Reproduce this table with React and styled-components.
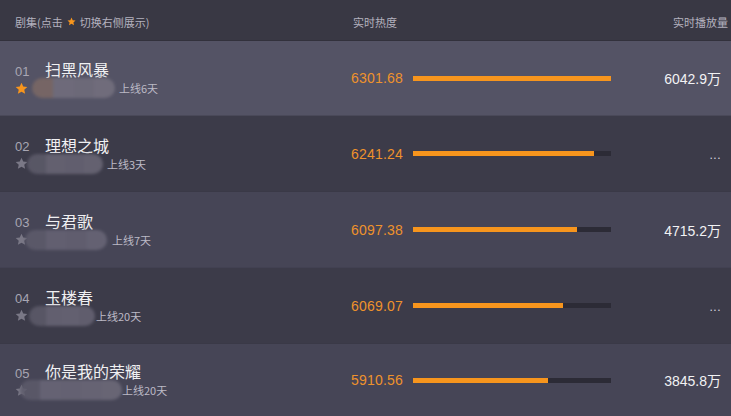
import React from "react";
import styled, { createGlobalStyle } from "styled-components";

const Global = createGlobalStyle`
  html, body { margin: 0; padding: 0; background: #3b3a48; }
  body { font-family: "Liberation Sans", "Noto Sans CJK SC", Arial, sans-serif; }
`;

const Board = styled.div`
  width: 731px;
  height: 416px;
  overflow: hidden;
  background: #3b3a48;
`;

const Header = styled.div`
  height: 41px;
  display: flex;
  align-items: center;
  background: #393844;
  border-bottom: 1px solid #32313c;
  font-family: "Noto Sans CJK SC", sans-serif;
  font-size: 11px;
  color: #b4b2bf;
  padding-top: 3px;
  box-sizing: border-box;
`;

const HeadLeft = styled.div`
  width: 353px;
  padding-left: 15px;
  box-sizing: border-box;
  display: flex;
  align-items: center;
  gap: 4px;
`;

const HeadMid = styled.div`
  flex: 1;
`;

const HeadRight = styled.div`
  padding-right: 3px;
`;

const Row = styled.div`
  height: ${(p) => p.$h}px;
  display: flex;
  align-items: center;
  background: ${(p) => p.$bg};
  box-sizing: border-box;
  border-bottom: 1px solid ${(p) => p.$line};
`;

const Info = styled.div`
  width: 351px;
  padding-left: 15px;
  box-sizing: border-box;
  display: flex;
  flex-direction: column;
  margin-top: 0px;
`;

const TitleLine = styled.div`
  display: flex;
  align-items: center;
  height: 20px;
`;

const Num = styled.span`
  width: 30px;
  font-size: 13px;
  color: #a8a6b3;
  padding-top: 4px;
`;

const Title = styled.span`
  font-family: "Noto Sans CJK SC", sans-serif;
  font-size: 16px;
  color: #f0f0f2;
  line-height: 20px;
`;

const SubLine = styled.div`
  display: flex;
  align-items: center;
  height: 18px;
`;

const Blob = styled.div`
  height: 20px;
  margin-left: ${(p) => p.$ml}px;
  width: ${(p) => p.$w}px;
  border-radius: 10px;
  filter: blur(1.5px);
  display: flex;
  overflow: hidden;
  opacity: 0.85;
`;

const Tile = styled.div`
  flex: 1;
  background: ${(p) => p.$c};
`;

const Online = styled.span`
  font-family: "Noto Sans CJK SC", sans-serif;
  font-size: 11px;
  color: #bcbac6;
  margin-left: ${(p) => p.$ml}px;
`;

const Heat = styled.div`
  width: 62px;
  font-size: 14px;
  color: #ee922c;
  letter-spacing: 0.2px;
`;

const Track = styled.div`
  width: 198px;
  height: 5px;
  background: #2c2b36;
  display: flex;
`;

const Fill = styled.div`
  height: 100%;
  background: #f7951d;
`;

const Plays = styled.div`
  flex: 1;
  text-align: right;
  padding-right: 10px;
  font-size: 14px;
  color: #f2f2f4;
  font-family: "Liberation Sans", "Noto Sans CJK SC", sans-serif;
`;

const Dots = styled.span`
  font-size: 12px;
  color: #d8d6e0;
  letter-spacing: 0.5px;
`;

const Star = ({ color, size = 13 }) => (
  <svg width={size} height={size} viewBox="0 0 24 24" style={{ flex: "none" }}>
    <path
      d="M12 1.5l3.2 7 7.5.8-5.6 5.1 1.6 7.4L12 18l-6.7 3.8 1.6-7.4L1.3 9.3l7.5-.8z"
      fill={color}
    />
  </svg>
);

const rows = [
  { n: "01", t: "扫黑风暴", d: "上线6天", heat: "6301.68", pct: 100, plays: "6042.9万", bg: "#545365", line: "#4a4959", h: 75, star: "#f7951d", bw: 83, bml: 4, oml: 4, tiles: ["#7c6965", "#736f7e", "#716d7c", "#75717f"] },
  { n: "02", t: "理想之城", d: "上线3天", heat: "6241.24", pct: 91.4, plays: null, bg: "#3c3b49", line: "#3a3947", h: 76, star: "#7a7886", bw: 76, bml: -1, oml: 4, tiles: ["#5e5c6b", "#6a6776", "#686575", "#6b6877"] },
  { n: "03", t: "与君歌", d: "上线7天", heat: "6097.38", pct: 82.8, plays: "4715.2万", bg: "#464556", line: "#424152", h: 76, star: "#7a7886", bw: 82, bml: -3, oml: 5, tiles: ["#5e5c6c", "#676475", "#656273", "#6a6778"] },
  { n: "04", t: "玉楼春", d: "上线20天", heat: "6069.07", pct: 75.7, plays: null, bg: "#3c3b49", line: "#3a3947", h: 76, star: "#7a7886", bw: 66, bml: 1, oml: 1, tiles: ["#5d5b6a", "#696676", "#6a6777", "#676474"] },
  { n: "05", t: "你是我的荣耀", d: "上线20天", heat: "5910.56", pct: 68.2, plays: "3845.8万", bg: "#464556", line: "#464556", h: 73, star: "#7a7886", bw: 102, bml: -8, oml: 0, tiles: ["#5d5b6b", "#6b6879", "#6a6777", "#6c6979", "#6e6b7a"] },
];

export default function App() {
  return (
    <Board>
      <Global />
      <Header>
        <HeadLeft>
          <span>剧集(点击</span>
          <Star color="#f7951d" size={9} />
          <span>切换右侧展示)</span>
        </HeadLeft>
        <HeadMid>实时热度</HeadMid>
        <HeadRight>实时播放量</HeadRight>
      </Header>
      {rows.map((r) => (
        <Row key={r.n} $bg={r.bg} $line={r.line} $h={r.h}>
          <Info>
            <TitleLine>
              <Num>{r.n}</Num>
              <Title>{r.t}</Title>
            </TitleLine>
            <SubLine>
              <Star color={r.star} />
              <Blob $w={r.bw} $ml={r.bml}>
                {r.tiles.map((c, i) => (
                  <Tile key={i} $c={c} />
                ))}
              </Blob>
              <Online $ml={r.oml}>{r.d}</Online>
            </SubLine>
          </Info>
          <Heat>{r.heat}</Heat>
          <Track>
            <Fill style={{ width: `${r.pct}%` }} />
          </Track>
          <Plays>{r.plays ? r.plays : <Dots>...</Dots>}</Plays>
        </Row>
      ))}
    </Board>
  );
}
